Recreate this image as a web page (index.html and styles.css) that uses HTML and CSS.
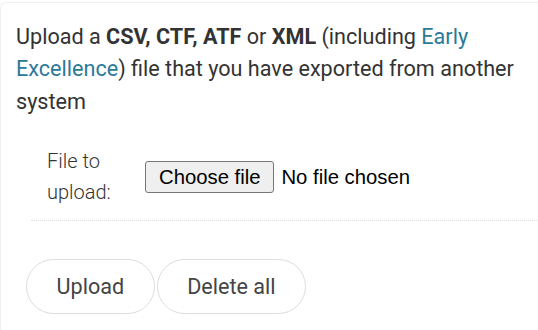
FILE: index.html
```html
<!DOCTYPE html>
<html lang="en">
<head>
    <meta charset="UTF-8">
    <meta name="viewport" content="width=device-width, initial-scale=1.0">
    <title>Import</title>
    <link rel="stylesheet" href="styles.css">
</head>
<body>
    <div class="panel">
        <p class="intro">
            Upload a <b>CSV, CTF, ATF</b> or <b>XML</b> (including <a href="#">Early Excellence</a>) file that you have exported from another system
        </p>

        <div class="form-row">
            <label for="importFile">File to upload:</label>
            <div class="file-field">
                <input type="file" id="importFile" class="file-hidden">
                <button class="file-btn" type="button">Choose file</button>
                <span class="file-name">No file chosen</span>
            </div>
        </div>

        <div class="actions">
            <button class="pill">Upload</button>
            <button class="pill">Delete all</button>
        </div>
    </div>
</body>
</html>
```

FILE: styles.css
```css
body {
    font-family: Roboto, 'Liberation Sans', sans-serif;
    margin: 0;
    padding: 0;
    background: #fff;
    color: #333;
    overflow: hidden;
}

.panel {
    margin-top: 2px;
    margin-right: -20px;
    border: 1px solid #f0f0f0;
    border-bottom: 0;
    border-radius: 6px 6px 0 0;
    padding: 18px 0 0 15px;
    height: 328px;
    box-sizing: border-box;
}

.intro {
    margin: 0;
    font-size: 21.6px;
    line-height: 32.4px;
    padding-right: 20px;
}

.intro a {
    color: #2b7a99;
    text-decoration: none;
}

.form-row {
    display: flex;
    align-items: center;
    margin: 28px 0 0 15px;
    padding: 0 0 12px 16px;
    border-bottom: 1px dotted #ddd;
}

.form-row label {
    width: 98px;
    font-size: 20px;
    font-weight: 300;
    line-height: 31px;
}

.file-field {
    display: flex;
    align-items: center;
    font-family: 'Liberation Sans', Arial, sans-serif;
    font-size: 20.3px;
    color: #000;
}

.file-hidden {
    display: none;
}

.file-btn {
    font-family: 'Liberation Sans', Arial, sans-serif;
    font-size: 20.3px;
    color: #000;
    background: #efefef;
    border: 1px solid #767676;
    border-radius: 3px;
    padding: 3px 13px;
    line-height: 24px;
    margin-right: 7px;
}

.actions {
    display: flex;
    gap: 2px;
    margin: 38px 0 0 10px;
}

.pill {
    font-family: Roboto, sans-serif;
    font-size: 21.6px;
    color: #444;
    background: #fff;
    border: 1px solid #ddd;
    border-radius: 28px;
    padding: 14px 29.5px;
    line-height: 25px;
    cursor: pointer;
}
```
